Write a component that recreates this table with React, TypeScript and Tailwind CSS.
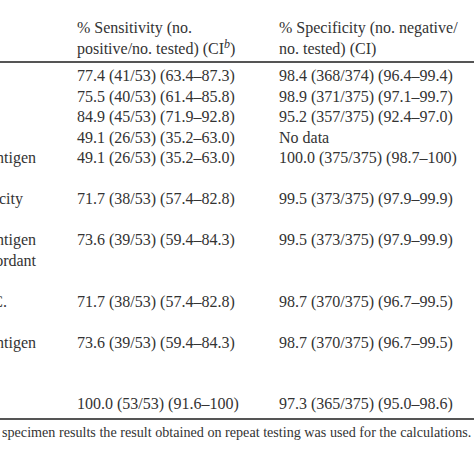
import type { ReactNode } from "react";

type Row = {
  labels: { text: string; pr: string }[];
  lines: number;
  sens: string;
  spec: string;
};

const rows: Row[] = [
  { labels: [], lines: 1, sens: "77.4 (41/53) (63.4–87.3)", spec: "98.4 (368/374) (96.4–99.4)" },
  { labels: [], lines: 1, sens: "75.5 (40/53) (61.4–85.8)", spec: "98.9 (371/375) (97.1–99.7)" },
  { labels: [], lines: 1, sens: "84.9 (45/53) (71.9–92.8)", spec: "95.2 (357/375) (92.4–97.0)" },
  { labels: [], lines: 1, sens: "49.1 (26/53) (35.2–63.0)", spec: "No data" },
  { labels: [{ text: "antigen", pr: "pr-[41px]" }], lines: 2, sens: "49.1 (26/53) (35.2–63.0)", spec: "100.0 (375/375) (98.7–100)" },
  { labels: [{ text: "specificity", pr: "pr-[54px]" }], lines: 2, sens: "71.7 (38/53) (57.4–82.8)", spec: "99.5 (373/375) (97.9–99.9)" },
  {
    labels: [
      { text: "antigen", pr: "pr-[41px]" },
      { text: "concordant", pr: "pr-[41px]" },
    ],
    lines: 3,
    sens: "73.6 (39/53) (59.4–84.3)",
    spec: "99.5 (373/375) (97.9–99.9)",
  },
  { labels: [{ text: "C.", pr: "pr-[70px]" }], lines: 2, sens: "71.7 (38/53) (57.4–82.8)", spec: "98.7 (370/375) (96.7–99.5)" },
  { labels: [{ text: "antigen", pr: "pr-[41px]" }], lines: 3, sens: "73.6 (39/53) (59.4–84.3)", spec: "98.7 (370/375) (96.7–99.5)" },
  { labels: [], lines: 1, sens: "100.0 (53/53) (91.6–100)", spec: "97.3 (365/375) (95.0–98.6)" },
];

const Line = ({ children }: { children?: ReactNode }) => (
  <div className="h-[20.5px] leading-[20.5px] whitespace-nowrap">{children}</div>
);

export default function App() {
  return (
    <div className="w-[474px] h-[474px] overflow-hidden bg-white text-[#333] font-['Liberation_Serif',serif] text-[16px]">
      <div className="grid grid-cols-[77px_202px_1fr] pt-[18px] pb-[2px]">
        <div />
        <div>
          <Line>% Sensitivity (no.</Line>
          <Line>
            positive/no. tested) (CI<sup><i>b</i></sup>)
          </Line>
        </div>
        <div>
          <Line>% Specificity (no. negative/</Line>
          <Line>no. tested) (CI)</Line>
        </div>
      </div>
      <div className="h-[2px] bg-[#555]" />
      <div className="pt-[3px] pb-[3px]">
        {rows.map((r, i) => (
          <div key={i} className="grid grid-cols-[77px_202px_1fr]">
            <div className="overflow-hidden">
              {Array.from({ length: r.lines }).map((_, j) => {
                const l = r.labels[j];
                return (
                  <div key={j} className={`flex justify-end overflow-hidden ${l ? l.pr : ""}`}>
                    <Line>{l ? l.text : ""}</Line>
                  </div>
                );
              })}
            </div>
            <div>
              <Line>{r.sens}</Line>
            </div>
            <div>
              <Line>{r.spec}</Line>
            </div>
          </div>
        ))}
      </div>
      <div className="h-[2px] bg-[#555]" />
      <div className="pl-[2px] pt-[2px] text-[14.15px] leading-[20px] whitespace-nowrap">
        specimen results the result obtained on repeat testing was used for the calculations.
      </div>
    </div>
  );
}
